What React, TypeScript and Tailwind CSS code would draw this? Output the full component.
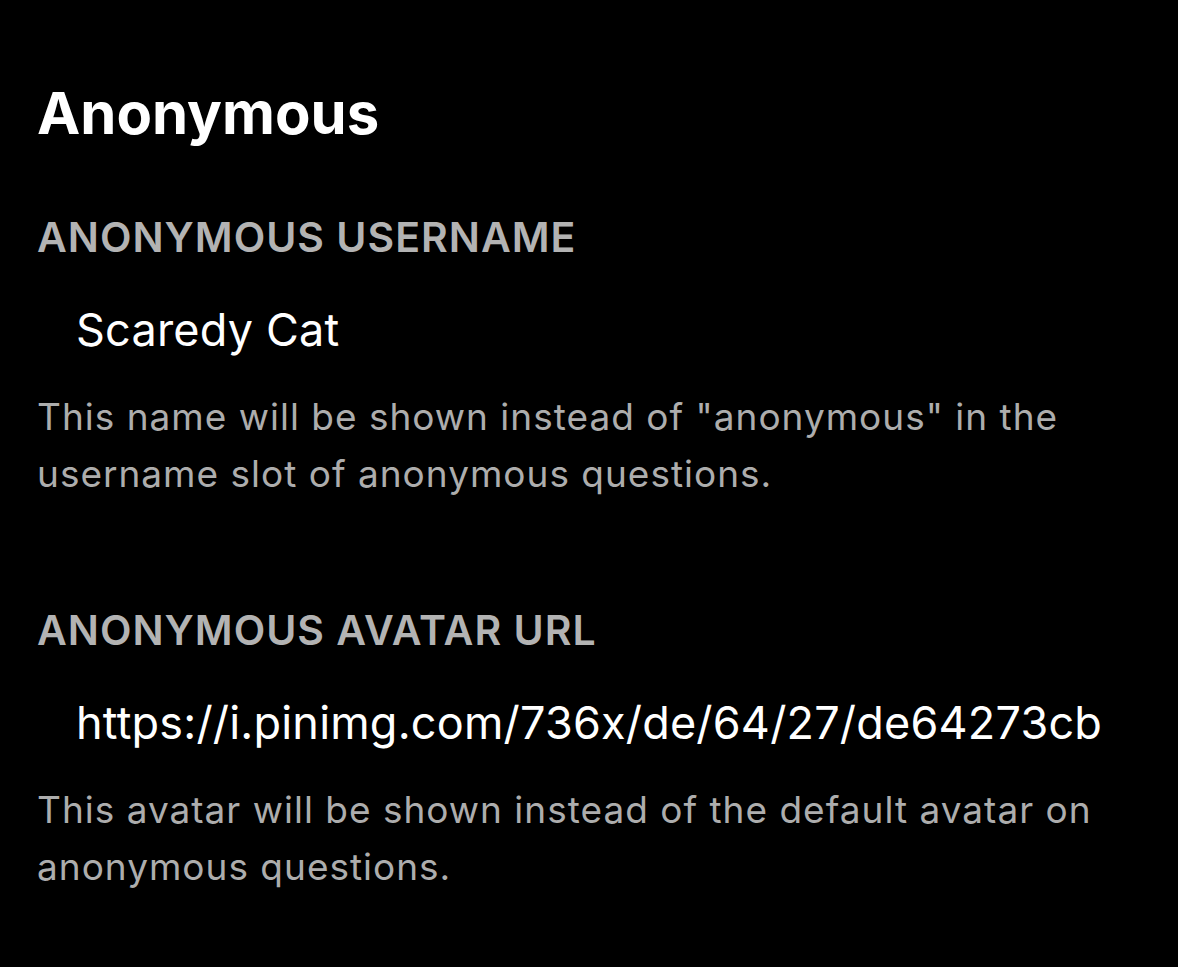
import React from 'react';

const font = { fontFamily: 'Inter, "Noto Sans", sans-serif' };

type FieldProps = {
  label: string;
  value: string;
  help: string;
};

// One settings field: caps label, the value row, and the help text below
const Field: React.FC<FieldProps> = ({ label, value, help }) => {
  return (
    <div className="flex flex-col">
      <div className="text-[41px] leading-[48px] font-semibold tracking-[1px] text-[#b3b3b3] uppercase">
        {label}
      </div>
      <div className="mt-[43px] pl-[39px] whitespace-nowrap text-[45px] leading-[52px] tracking-[0.2px] text-white">
        {value}
      </div>
      <div className="mt-[32px] text-[37px] leading-[57px] tracking-[1px] text-[#adadad]">
        {help}
      </div>
    </div>
  );
};

export default function App() {
  return (
    <div className="min-h-[967px] w-full bg-black" style={font}>
      <div className="pl-[37px] pr-[40px] pt-[81px]">
        <h1 className="text-[58px] leading-[64px] font-bold text-white">Anonymous</h1>

        <div className="mt-[68px] flex flex-col gap-[104px]">
          <Field
            label="Anonymous Username"
            value="Scaredy Cat"
            help={'This name will be shown instead of "anonymous" in the username slot of anonymous questions.'}
          />
          <Field
            label="Anonymous Avatar URL"
            value="https://i.pinimg.com/736x/de/64/27/de64273cb"
            help="This avatar will be shown instead of the default avatar on anonymous questions."
          />
        </div>
      </div>
    </div>
  );
}
